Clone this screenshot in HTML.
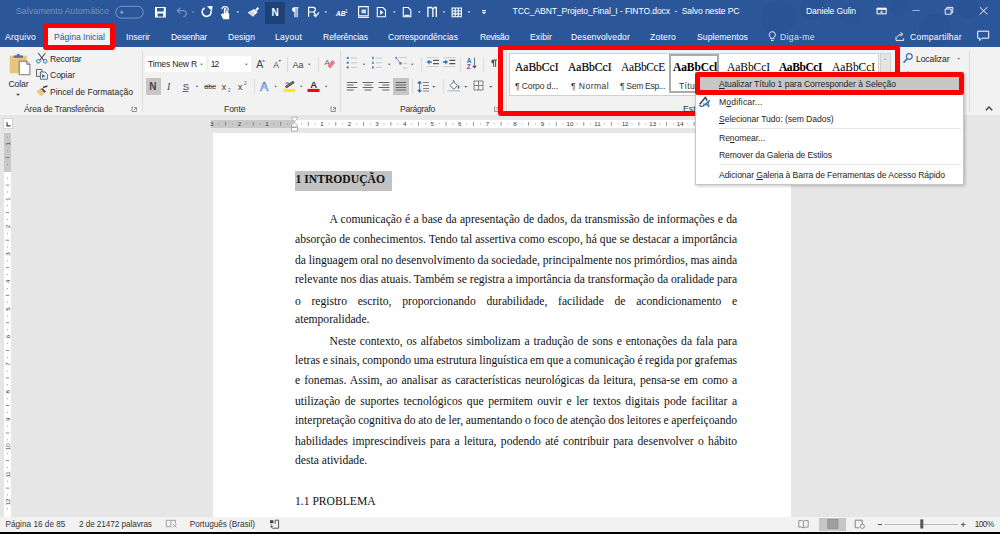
<!DOCTYPE html>
<html lang="pt-BR">
<head>
<meta charset="utf-8">
<title>TCC_ABNT_Projeto_Final_I - FINTO.docx - Word</title>
<style>
html,body{margin:0;padding:0;}
body{width:1000px;height:534px;position:relative;overflow:hidden;background:#e6e6e6;font-family:"Liberation Sans",sans-serif;}
.a{position:absolute;}
.t{position:absolute;white-space:pre;line-height:14px;height:14px;}
.t u{text-decoration:underline;text-underline-offset:1px;}
#blue{left:0;top:0;width:1000px;height:47px;background:#2b579a;}
#ribbon{left:0;top:47px;width:1000px;height:67.6px;background:#f2f2f2;}
#docbg{left:0;top:114.6px;width:1000px;height:402.4px;background:#e6e6e6;}
#page{left:212.5px;top:133px;width:578.5px;height:384px;background:#fff;}
#status{left:0;top:516.8px;width:1000px;height:15.3px;background:#f2f2f2;}
#black{left:0;top:532.1px;width:1000px;height:3px;background:#000;}
.sep{position:absolute;width:1px;background:#dcdcdc;}
.red{position:absolute;border:5px solid #fd0002;border-radius:3px;box-sizing:border-box;}
.doc{position:absolute;font-family:"Liberation Serif",serif;font-size:11.62px;line-height:20.2px;height:20.2px;color:#111;white-space:pre;}
#menu{left:694.6px;top:72px;width:269px;height:112.8px;background:#fff;border:1px solid #c6c6c6;box-sizing:border-box;z-index:10;box-shadow:1px 1px 3px rgba(0,0,0,0.25);}
.msep{position:absolute;left:719px;width:242px;height:1px;background:#e6e6e6;z-index:20;}
svg{position:absolute;overflow:visible;}
</style>
</head>
<body>
<div id="blue" class="a"></div>
<div id="ribbon" class="a"></div>
<div id="docbg" class="a"></div>
<div id="page" class="a"></div>
<div id="status" class="a"></div>
<div id="black" class="a"></div>

<!-- subtle title bar pattern -->
<svg class="a" style="left:700px;top:0;" width="300" height="47" viewBox="700 0 300 47">
<g fill="#1f4a8a" fill-opacity="0.22">
<circle cx="778" cy="18" r="17"/><circle cx="812" cy="8" r="12"/><circle cx="850" cy="14" r="10"/>
<circle cx="935" cy="30" r="16"/><circle cx="968" cy="8" r="10"/><circle cx="898" cy="6" r="9"/>
</g></svg>
<!-- active tab -->
<div class="a" style="left:48px;top:28px;width:63px;height:19px;background:#f2f2f2;"></div>
<!-- N button in QAT -->
<div class="a" style="left:265px;top:2px;width:20px;height:22px;background:#1e4178;"></div>


<!-- ribbon group separators -->
<div class="sep" style="left:141.5px;top:51px;height:61px;"></div>
<div class="sep" style="left:340px;top:51px;height:61px;"></div>
<div class="sep" style="left:968.5px;top:51px;height:61px;"></div>
<div class="sep" style="left:287px;top:57px;height:15px;"></div>
<div class="sep" style="left:318px;top:57px;height:15px;"></div>
<div class="sep" style="left:254px;top:79px;height:15px;"></div>
<div class="sep" style="left:421px;top:57px;height:15px;"></div>
<div class="sep" style="left:460px;top:57px;height:15px;"></div>
<div class="sep" style="left:483px;top:57px;height:15px;"></div>
<div class="sep" style="left:443px;top:79px;height:15px;"></div>
<div class="sep" style="left:411.7px;top:79px;height:15px;"></div>
<div class="sep" style="left:506px;top:51px;height:61px;"></div>

<!-- font boxes -->
<div class="a" style="left:145px;top:56px;width:61px;height:16px;background:#fff;"></div>
<div class="a" style="left:208.5px;top:56px;width:42px;height:16px;background:#fff;"></div>
<!-- bold active -->
<div class="a" style="left:145.5px;top:78px;width:15.5px;height:17px;background:#c6c6c6;"></div>
<!-- justify active -->
<div class="a" style="left:393px;top:78px;width:15.5px;height:17px;background:#c6c6c6;"></div>

<!-- styles gallery -->
<div class="a" style="left:509px;top:52.5px;width:370px;height:43.5px;background:#fff;border:1px solid #d0d0d0;box-sizing:border-box;"></div>
<div class="a" style="left:669.2px;top:54px;width:50.2px;height:39px;border:2px solid #ababab;box-sizing:border-box;"></div>
<div class="a" style="left:879.5px;top:52.5px;width:11px;height:43.5px;background:#e4e4e4;border:1px solid #d0d0d0;box-sizing:border-box;"></div>

<svg class="a" style="left:0;top:0;" width="1000" height="134" viewBox="0 0 1000 134" fill="none" stroke-linecap="butt">
<!-- ===== Title bar (QAT) ===== -->
<g stroke="#fff" stroke-opacity="0.36" fill="none">
  <rect x="115.8" y="6.3" width="27.4" height="11.8" rx="5.9" stroke-width="1"/>
  <circle cx="121.8" cy="12.2" r="1.7" fill="#fff" fill-opacity="0.36" stroke="none"/>
  <!-- undo (disabled) -->
  <path d="M180.5 7.6 L177.3 10.6 L180.5 13.6 M177.6 10.6 H183 Q186.3 10.6 186.3 13.6 Q186.3 16 183.5 17" stroke-width="1.2"/>
  <path d="M191.5 11.5 h3 l-1.5 1.8z" fill="#fff" fill-opacity="0.36" stroke="none"/>
</g>
<g fill="#fff" stroke="none">
  <!-- save -->
  <path d="M155 7 h10.8 v10.4 h-10.8z M157 8 v3.6 h6.8 v-3.6z M157.6 13.4 v3 h5.6 v-3z" fill-rule="evenodd"/>
  <rect x="161.3" y="14" width="1.2" height="2.4" fill="#2b579a"/>
  <!-- redo / repeat -->
  <path d="M204.600 8 A4.400 4.400 0 1 0 210.900 10.800" stroke="#fff" stroke-width="1.700" fill="none"/>
  <path d="M207 6.200 L212.500 5.900 L212.100 11.200z"/>
  <!-- touch/mouse mode -->
  <path d="M222 9.2 Q222 6.6 225 6.6 Q228.2 6.6 228.2 9.6 Q228.2 11.6 226.4 12.2 L228.6 13.4 V18.6 H223.6 L221.6 14.8 L223 14 L224.4 15.4 V9.4 Q224.4 8.6 225.2 8.6 Q226 8.6 226 9.6 V11.4" stroke="#fff" stroke-width="1.1" fill="none"/>
  <path d="M224.4 12.2 L228.6 13.4 V18.6 H223.6 L221.6 14.8 L223 14 L224.4 15.4z"/>
  <path d="M236.5 11.5 h2.6 l-1.3 1.5z"/>
  <!-- format painter -->
  <path d="M254.200 9 L257.600 12.200 L253 16.800 L247.600 12.600z"/>
  <path d="M256 10.400 L258.400 7.800" stroke="#fff" stroke-width="2"/>
  <path d="M251.300 11.300 L254.800 14.600 M249.600 12.200 L253.600 15.800" stroke="#2b579a" stroke-width="0.500"/>
  <!-- pilcrow -->
  <path d="M298.6 7.2 v1 h-0.9 v9 h-1.2 v-9 h-0.9 v9 h-1.2 v-5.2 a2.4 2.4 0 0 1 0 -4.8z"/>
  <!-- tracked-changes like icon -->
  <path d="M308 7.4 h5.2 q2.2 0 2.2 2.2 q0 1.800 -1.6 2.2 l2 3.4 M308.6 7.4 v9.400 M308.6 12 h5" stroke="#fff" stroke-width="1.2" fill="none"/>
  <path d="M313.600 14.600 l2 2 l3.400 -4.200" stroke="#fff" stroke-width="1.200" fill="none"/>
  <path d="M324.500 11.500 h2.600 l-1.300 1.500z"/>
</g>
<text x="275" y="15.700" font-family="Liberation Sans, sans-serif" font-weight="bold" font-size="10" fill="#fff" text-anchor="middle">N</text>

<!-- QAT continued -->
<g fill="#fff" stroke="none">
  <text x="336" y="16" font-family="Liberation Sans, sans-serif" font-style="italic" font-weight="bold" font-size="6.5" fill="#fff">AB</text>
  <text x="345" y="12.5" font-family="Liberation Sans, sans-serif" font-size="4.5" fill="#fff">1</text>
  <!-- page box -->
  <path d="M358.6 6.6 h9.6 v9.2 h-9.6z" stroke="#fff" stroke-width="1.1" fill="none"/>
  <rect x="358" y="16.6" width="10.8" height="1.3"/>
  <rect x="361.5" y="9.5" width="4.5" height="3.8" fill-opacity="0.8"/>
  <!-- doc with arrow -->
  <path d="M377.3 7.5 h5.7 l2.5 2.500 v6.800 h-8.200z" stroke="#fff" stroke-width="1.1" fill="none"/>
  <path d="M380 10 l3.600 2.400 -3.600 2.400z"/>
  <path d="M393 11.500 h2.600 l-1.300 1.500z"/>
  <!-- page -->
  <path d="M403.300 7.500 h5 l2.500 2.500 v6.800 h-7.500z" stroke="#fff" stroke-width="1.1" fill="none"/>
  <rect x="404.500" y="14.800" width="5" height="1.500"/>
  <path d="M418 11.500 h2.600 l-1.300 1.500z"/>
  <!-- columns -->
  <path d="M427.900 17 v-9.500 h3.600 l1.400 1.400 v8.100 M432.900 8.900 l1.400 -1.400 h2 v9.500" stroke="#fff" stroke-width="1.300" fill="none"/>
  <path d="M442.700 11.500 h2.600 l-1.300 1.500z"/>
  <!-- table -->
  <path d="M452.100 8 h9.300 v8.700 h-9.300z M452.100 11 h9.300 M452.100 13.900 h9.300 M455.200 8 v8.700 M458.300 8 v8.700" stroke="#fff" stroke-width="1.100" fill="none"/>
  <path d="M467.700 11.500 h2.600 l-1.300 1.500z"/>
  <!-- customize -->
  <rect x="482" y="10" width="4" height="0.900"/>
  <path d="M481.800 11.800 h4.400 l-2.200 2.400z"/>
  <!-- ribbon display options -->
  <path d="M877 8.200 h9.200 v5.600 h-9.200z" stroke="#fff" stroke-width="1" fill="none"/>
  <rect x="877" y="8.200" width="9.200" height="1.600"/>
  <path d="M881.600 10.600 l1.600 1.800 h-3.200z"/>
  <!-- window controls -->
  <rect x="912.400" y="10" width="7.400" height="0.800" fill-opacity="0.7"/>
  <path d="M945.200 9 h6 v5.200 h-6z M946.800 9 v-1.600 h6 v5.200 h-1.600" stroke="#fff" stroke-width="0.900" fill="none"/>
  <path d="M979.800 7.200 l7.600 7.200 M987.400 7.200 l-7.600 7.200" stroke="#fff" stroke-width="0.900" fill="none"/>
  <!-- bulb -->
  <path d="M772.300 31.700 a3 3 0 0 1 1.600 5.600 v1.400 h-3.200 v-1.400 a3 3 0 0 1 1.600 -5.600z M771 40.500 h2.600" stroke="#fff" stroke-width="0.900" fill="none"/>
  <!-- share -->
  <path d="M896 36.800 v3.600 h7.600 v-2 M896.800 37.500 q1.200 -3.200 4.600 -3.200 M900.400 32.300 l2.600 2 -2.600 2" stroke="#fff" stroke-width="0.900" fill="none"/>
  <!-- comment -->
  <path d="M977.700 31.200 h11 v7 h-6.800 l-2.200 2.400 v-2.400 h-2z" stroke="#fff" stroke-width="1" fill="none"/>
</g>

<!-- ===== Ribbon: clipboard ===== -->
<rect x="9.700" y="55.800" width="17.100" height="17.500" fill="#eac47c"/>
<path d="M13.600 57.700 v-2.200 h3 a1.700 1.700 0 0 1 3.400 0 h3 v2.200z" fill="#5a6b84"/>
<path d="M19.200 61.200 h7.600 l3.100 3.100 v10.400 h-10.700z" fill="#fff" stroke="#555" stroke-width="0.800"/>
<path d="M26.800 61.200 v3.100 h3.100" fill="none" stroke="#555" stroke-width="0.800"/>
<path d="M16 93.800 h4 l-2 2.200z" fill="#555"/>
<!-- scissors -->
<path d="M38.200 53 l5.400 7.200 M45.400 53 l-5.400 7.200" stroke="#555" stroke-width="1.100"/>
<circle cx="38.400" cy="61.300" r="1.800" stroke="#2e75b6" stroke-width="1"/>
<circle cx="45.200" cy="61.300" r="1.800" stroke="#2e75b6" stroke-width="1"/>
<!-- copy -->
<path d="M36.500 69.400 h5.400 v7 h-5.400z" stroke="#555" stroke-width="0.900" fill="#f1f1f1"/>
<path d="M40.400 72 h4.600 l2.400 2.400 v4.800 h-7z" stroke="#555" stroke-width="0.900" fill="#fff"/>
<path d="M42 74 l3.600 2 -3.600 2z" fill="#2e75b6"/>
<!-- format painter -->
<path d="M36.400 91.400 l4.600 -3.400 4 4.200 -3.800 4z" fill="#eac47c"/>
<path d="M41.600 88.600 l3.800 3.600 M43 87.600 l4.400 -1.600" stroke="#444" stroke-width="1.600"/>
<!-- launchers -->
<g stroke="#777" stroke-width="0.800" fill="none">
<path d="M133 107 h-1 v4.500 h4.500 v-1 M134 107.500 h2.500 v2.500 M136.300 107.700 l-2.300 2.300"/>
<path d="M332 107 h-1 v4.500 h4.500 v-1 M333 107.500 h2.500 v2.500 M335.300 107.700 l-2.300 2.300"/>
<path d="M495.500 107 h-1 v4.500 h4.500 v-1 M496.500 107.500 h2.500 v2.500 M498.800 107.700 l-2.300 2.300"/>
</g>

<!-- ===== Ribbon: font ===== -->
<g fill="#555">
<path d="M200.300 63.700 h2.600 l-1.300 1.500z"/>
<path d="M245.100 63.700 h2.600 l-1.300 1.500z"/>
<path d="M308 63.700 h2.600 l-1.300 1.500z"/>
<path d="M195.700 85.700 h2.600 l-1.300 1.500z"/>
<path d="M274.400 85.700 h2.600 l-1.300 1.500z"/>
<path d="M299.900 85.700 h2.600 l-1.300 1.500z"/>
<path d="M324.900 85.700 h2.600 l-1.300 1.500z"/>
</g>
<g font-family="Liberation Sans, sans-serif" fill="#444">
<text x="256.300" y="67.700" font-size="10.500">A</text>
<path d="M262 61.500 l1.600 -1.800 1.600 1.800z" fill="#2e75b6"/>
<text x="273.200" y="67.700" font-size="8.500">A</text>
<path d="M278.200 60 l1.600 1.800 1.600 -1.800z" fill="#2e75b6"/>
<text x="292.600" y="67.500" font-size="9">Aa</text>
<text x="149.300" y="90.200" font-size="10" font-weight="bold">N</text>
<text x="167" y="90.200" font-size="10" font-style="italic" font-family="Liberation Serif, serif">I</text>
<text x="182.700" y="89.800" font-size="9.500">S</text>
<rect x="182.500" y="91" width="6" height="0.800"/>
<text x="204.200" y="89" font-size="7.200">abc</text>
<rect x="204" y="86.200" width="12" height="0.700"/>
<text x="221.600" y="89.500" font-size="9.500">x</text>
<text x="227.800" y="91.500" font-size="5" fill="#2e75b6">2</text>
<text x="237.800" y="89.500" font-size="9.500">x</text>
<text x="243.800" y="84.500" font-size="5" fill="#2e75b6">2</text>
<text x="260" y="90.600" font-size="12.500" fill="#fff" stroke="#4a8acb" stroke-width="0.650">A</text>
<text x="310.300" y="88" font-size="9.500" font-weight="bold" fill="#333">A</text>
</g>
<rect x="307.500" y="88.900" width="12" height="3.100" fill="#fb0007"/>
<rect x="283.500" y="88.900" width="11.700" height="3.100" fill="#ffec00"/>
<path d="M285.200 86.600 l7.800 -5.400 1.200 1.600 -7.400 5z M285.600 83 h3.600" stroke="#444" stroke-width="0.900" fill="#777"/>
<!-- clear formatting -->
<text x="324.500" y="65" font-size="8" font-family="Liberation Sans, sans-serif" fill="#666">A</text>
<path d="M327.400 65.800 l5 -5.800 2.800 2.600 -5 5.800z" fill="#e8788a"/>

<!-- ===== Ribbon: paragraph ===== -->
<g fill="#2e75b6">
<rect x="346.800" y="57" width="1.900" height="1.900"/><rect x="346.800" y="61.800" width="1.900" height="1.900"/><rect x="346.800" y="66.400" width="1.900" height="1.900"/>
<rect x="372.200" y="56.800" width="1.400" height="2.400"/><rect x="372.200" y="61.600" width="1.400" height="2.400"/><rect x="372.200" y="66.200" width="1.400" height="2.400"/>
<rect x="395.300" y="56.900" width="1.500" height="1.500"/><rect x="399.300" y="62.300" width="2.200" height="2.200"/>
<path d="M396 58 l4 4.600" stroke="#2e75b6" stroke-width="0.800"/>
</g>
<g stroke="#c4c4c4" stroke-width="0.900">
<path d="M350.800 58 h6.400 M350.800 62.800 h6.400 M350.800 67.400 h6.400"/>
<path d="M375.800 58 h6.400 M375.800 62.800 h6.400 M375.800 67.400 h6.400"/>
<path d="M398.500 57.600 h8.500 M403 63.300 h4.200 M403 68 h4.200"/>
</g>
<g fill="#555">
<path d="M362.700 63.700 h2.600 l-1.300 1.500z"/>
<path d="M388 63.700 h2.600 l-1.300 1.500z"/>
<path d="M411 63.700 h2.600 l-1.300 1.500z"/>
<path d="M432.300 85.900 h3 l-1.500 1.800z"/>
<path d="M464.300 85.900 h3 l-1.500 1.800z"/>
<path d="M489.300 85.900 h3 l-1.500 1.800z"/>
<path d="M957.300 58 h2.600 l-1.300 1.500z"/>
</g>
<!-- indents -->
<g stroke="#555" stroke-width="1.100">
<path d="M433 60.400 h6 M433 63.600 h6"/>
<path d="M449.300 60.400 h6 M449.300 63.600 h6"/>
</g>
<g stroke="#c4c4c4" stroke-width="0.800">
<path d="M426.500 57.600 h12.500 M426.500 66.600 h12.500 M442.800 57.600 h12.500 M442.800 66.600 h12.500"/>
</g>
<path d="M426.600 62 l3 -2.600 v1.800 h2.400 v1.600 h-2.400 v1.800z" fill="#2e75b6"/>
<path d="M448.200 62 l-3 -2.600 v1.800 h-2.400 v1.600 h2.400 v1.800z" fill="#2e75b6"/>
<!-- sort -->
<text x="466.800" y="62.600" font-size="6.500" font-weight="bold" font-family="Liberation Sans, sans-serif" fill="#2e75b6">A</text>
<text x="466.800" y="69" font-size="6.500" font-weight="bold" font-family="Liberation Sans, sans-serif" fill="#8e3ea8">Z</text>
<path d="M474.500 57.500 v9 M472.800 66 h3.400 l-1.700 2.200z" stroke="#555" stroke-width="0.800" fill="#555"/>
<!-- pilcrow -->
<path d="M497 59.600 v0.900 h-0.900 v6.500 h-1 v-6.500 h-0.900 v6.500 h-1 v-3.400 a2 2 0 0 1 0 -4z" fill="#555"/>
<!-- alignments -->
<g stroke="#666" stroke-width="1">
<path d="M346.800 82.500 h10.500 M346.800 85 h7 M346.800 87.500 h10.500 M346.800 90 h7"/>
<path d="M362.600 82.500 h10.800 M364.400 85 h7.200 M362.600 87.500 h10.800 M364.400 90 h7.200"/>
<path d="M378.600 82.500 h10.800 M382.200 85 h7.200 M378.600 87.500 h10.800 M382.200 90 h7.200"/>
<path d="M395.500 82.500 h10.600 M395.500 85 h10.600 M395.500 87.500 h10.600 M395.500 90 h10.600"/>
</g>
<!-- line spacing -->
<path d="M419.600 82 v9.400 M417.800 83.200 l1.800 -2.200 1.800 2.200z M417.800 90.200 l1.800 2.200 1.800 -2.200z" stroke="#2e75b6" stroke-width="0.900" fill="#2e75b6"/>
<path d="M423 82.500 h6 M423 85.500 h6 M423 88.500 h6 M423 91 h6" stroke="#777" stroke-width="0.900"/>
<!-- shading -->
<path d="M450 85.600 l3.600 -3.800 4 3.800 -3.800 3.800z" stroke="#555" stroke-width="0.900" fill="#fff"/>
<path d="M452.800 80.600 q1.400 -0.800 1.600 1.600" stroke="#555" stroke-width="0.800"/>
<path d="M458.600 85 q1.800 2.400 0 4 q-1.800 -1.600 0 -4z" fill="#2e75b6"/>
<rect x="447.500" y="90" width="12.500" height="1.500" fill="#c8c8c8"/>
<!-- borders -->
<path d="M474 81 h9 v9 h-9z M478.500 81 v9 M474 85.500 h9" stroke="#777" stroke-width="0.900"/>
<!-- find -->
<circle cx="909.300" cy="56.500" r="2.900" stroke="#2e75b6" stroke-width="1.200"/>
<path d="M907.200 58.800 l-3.600 3.800" stroke="#2e75b6" stroke-width="1.600"/>
<text x="904" y="75" font-size="6" font-family="Liberation Sans, sans-serif" fill="#2e75b6">ab</text>
<!-- collapse ribbon -->
<path d="M985.800 110.200 l3.200 -3.200 3.200 3.200" stroke="#444" stroke-width="1.500"/>
<!-- gallery scroll -->
<path d="M883.800 60 l1.400 -1.600 1.400 1.600z" fill="#aaa"/>
<!-- menu icon placeholder -->
</svg>


<!-- ruler -->
<div class="a" style="left:2.6px;top:118px;width:10.8px;height:10.6px;background:#fff;border:1px solid #d4d4d4;box-sizing:border-box;"></div>
<div class="a" style="left:211px;top:119.5px;width:83.5px;height:8.5px;background:#c8c8c8;"></div>
<div class="a" style="left:294.5px;top:119.5px;width:443px;height:8.5px;background:#fff;"></div>
<div class="a" style="left:737.5px;top:119.5px;width:54px;height:8.5px;background:#c8c8c8;"></div>
<!-- vertical ruler -->
<div class="a" style="left:3.8px;top:133px;width:7.4px;height:38.6px;background:#c8c8c8;"></div>
<div class="a" style="left:3.8px;top:171.600px;width:7.4px;height:345px;background:#fff;"></div>

<svg class="a" style="left:0;top:0;" width="1000" height="534" viewBox="0 0 1000 534" font-family="Liberation Sans, sans-serif" font-size="6.2" fill="#3a3a3a" text-anchor="middle">
<text x="211.8" y="126.0">3</text>
<rect x="218.3" y="123.3" width="0.8" height="1" fill="#888"/>
<rect x="225.2" y="122.0" width="0.8" height="3.6" fill="#777"/>
<rect x="232.1" y="123.3" width="0.8" height="1" fill="#888"/>
<text x="239.4" y="126.0">2</text>
<rect x="245.9" y="123.3" width="0.8" height="1" fill="#888"/>
<rect x="252.8" y="122.0" width="0.8" height="3.6" fill="#777"/>
<rect x="259.7" y="123.3" width="0.8" height="1" fill="#888"/>
<text x="266.9" y="126.0">1</text>
<rect x="273.4" y="123.3" width="0.8" height="1" fill="#888"/>
<rect x="280.3" y="122.0" width="0.8" height="3.6" fill="#777"/>
<rect x="287.2" y="123.3" width="0.8" height="1" fill="#888"/>
<rect x="301.0" y="123.3" width="0.8" height="1" fill="#888"/>
<rect x="307.9" y="122.0" width="0.8" height="3.6" fill="#777"/>
<rect x="314.8" y="123.3" width="0.8" height="1" fill="#888"/>
<text x="322.1" y="126.0">1</text>
<rect x="328.5" y="123.3" width="0.8" height="1" fill="#888"/>
<rect x="335.4" y="122.0" width="0.8" height="3.6" fill="#777"/>
<rect x="342.3" y="123.3" width="0.8" height="1" fill="#888"/>
<text x="349.6" y="126.0">2</text>
<rect x="356.1" y="123.3" width="0.8" height="1" fill="#888"/>
<rect x="363.0" y="122.0" width="0.8" height="3.6" fill="#777"/>
<rect x="369.9" y="123.3" width="0.8" height="1" fill="#888"/>
<text x="377.1" y="126.0">3</text>
<rect x="383.6" y="123.3" width="0.8" height="1" fill="#888"/>
<rect x="390.5" y="122.0" width="0.8" height="3.6" fill="#777"/>
<rect x="397.4" y="123.3" width="0.8" height="1" fill="#888"/>
<text x="404.7" y="126.0">4</text>
<rect x="411.2" y="123.3" width="0.8" height="1" fill="#888"/>
<rect x="418.1" y="122.0" width="0.8" height="3.6" fill="#777"/>
<rect x="425.0" y="123.3" width="0.8" height="1" fill="#888"/>
<text x="432.2" y="126.0">5</text>
<rect x="438.7" y="123.3" width="0.8" height="1" fill="#888"/>
<rect x="445.6" y="122.0" width="0.8" height="3.6" fill="#777"/>
<rect x="452.5" y="123.3" width="0.8" height="1" fill="#888"/>
<text x="459.8" y="126.0">6</text>
<rect x="466.3" y="123.3" width="0.8" height="1" fill="#888"/>
<rect x="473.2" y="122.0" width="0.8" height="3.6" fill="#777"/>
<rect x="480.1" y="123.3" width="0.8" height="1" fill="#888"/>
<text x="487.4" y="126.0">7</text>
<rect x="493.8" y="123.3" width="0.8" height="1" fill="#888"/>
<rect x="500.7" y="122.0" width="0.8" height="3.6" fill="#777"/>
<rect x="507.6" y="123.3" width="0.8" height="1" fill="#888"/>
<text x="514.9" y="126.0">8</text>
<rect x="521.4" y="123.3" width="0.8" height="1" fill="#888"/>
<rect x="528.3" y="122.0" width="0.8" height="3.6" fill="#777"/>
<rect x="535.2" y="123.3" width="0.8" height="1" fill="#888"/>
<text x="542.5" y="126.0">9</text>
<rect x="548.9" y="123.3" width="0.8" height="1" fill="#888"/>
<rect x="555.8" y="122.0" width="0.8" height="3.6" fill="#777"/>
<rect x="562.7" y="123.3" width="0.8" height="1" fill="#888"/>
<text x="570.0" y="126.0">10</text>
<rect x="576.5" y="123.3" width="0.8" height="1" fill="#888"/>
<rect x="583.4" y="122.0" width="0.8" height="3.6" fill="#777"/>
<rect x="590.3" y="123.3" width="0.8" height="1" fill="#888"/>
<text x="597.5" y="126.0">11</text>
<rect x="604.0" y="123.3" width="0.8" height="1" fill="#888"/>
<rect x="610.9" y="122.0" width="0.8" height="3.6" fill="#777"/>
<rect x="617.8" y="123.3" width="0.8" height="1" fill="#888"/>
<text x="625.1" y="126.0">12</text>
<rect x="631.6" y="123.3" width="0.8" height="1" fill="#888"/>
<rect x="638.5" y="122.0" width="0.8" height="3.6" fill="#777"/>
<rect x="645.4" y="123.3" width="0.8" height="1" fill="#888"/>
<text x="652.7" y="126.0">13</text>
<rect x="659.1" y="123.3" width="0.8" height="1" fill="#888"/>
<rect x="666.0" y="122.0" width="0.8" height="3.6" fill="#777"/>
<rect x="672.9" y="123.3" width="0.8" height="1" fill="#888"/>
<text x="680.2" y="126.0">14</text>
<rect x="686.7" y="123.3" width="0.8" height="1" fill="#888"/>
<rect x="693.6" y="122.0" width="0.8" height="3.6" fill="#777"/>
<rect x="700.5" y="123.3" width="0.8" height="1" fill="#888"/>
<text x="707.8" y="126.0">15</text>
<rect x="714.2" y="123.3" width="0.8" height="1" fill="#888"/>
<rect x="721.1" y="122.0" width="0.8" height="3.6" fill="#777"/>
<rect x="728.0" y="123.3" width="0.8" height="1" fill="#888"/>
<text x="735.3" y="126.0">16</text>
<rect x="741.8" y="123.3" width="0.8" height="1" fill="#888"/>
<rect x="748.7" y="122.0" width="0.8" height="3.6" fill="#777"/>
<rect x="755.6" y="123.3" width="0.8" height="1" fill="#888"/>
<text x="762.9" y="126.0">17</text>
<rect x="769.3" y="123.3" width="0.8" height="1" fill="#888"/>
<rect x="776.2" y="122.0" width="0.8" height="3.6" fill="#777"/>
<rect x="783.1" y="123.3" width="0.8" height="1" fill="#888"/>
<path d="M291.6 117.2 h5.8 v1.2 l-2.900 2.900 l-2.900 -2.900z" fill="#fff" stroke="#999" stroke-width="0.7"/>
<path d="M291.6 127 v-2 l2.900 -2.900 l2.900 2.900 v2z" fill="#fff" stroke="#999" stroke-width="0.7"/>
<rect x="291.6" y="127.600" width="5.800" height="3.400" fill="#fff" stroke="#999" stroke-width="0.7"/>
<path d="M7 122.300 v3.600 h3.600" fill="none" stroke="#444" stroke-width="1.200"/>
<rect x="7.0" y="136.5" width="1" height="0.8" fill="#888"/>
<text x="7.5" y="145.9" transform="rotate(-90 7.5 143.8)">1</text>
<rect x="7.0" y="150.2" width="1" height="0.8" fill="#888"/>
<rect x="5.7" y="157.1" width="3.6" height="0.8" fill="#777"/>
<rect x="7.0" y="164.0" width="1" height="0.8" fill="#888"/>
<rect x="7.0" y="177.8" width="1" height="0.8" fill="#888"/>
<rect x="5.7" y="184.7" width="3.6" height="0.8" fill="#777"/>
<rect x="7.0" y="191.6" width="1" height="0.8" fill="#888"/>
<text x="7.5" y="201.1" transform="rotate(-90 7.5 198.9)">1</text>
<rect x="7.0" y="205.3" width="1" height="0.8" fill="#888"/>
<rect x="5.7" y="212.2" width="3.6" height="0.8" fill="#777"/>
<rect x="7.0" y="219.1" width="1" height="0.8" fill="#888"/>
<text x="7.5" y="228.6" transform="rotate(-90 7.5 226.4)">2</text>
<rect x="7.0" y="232.9" width="1" height="0.8" fill="#888"/>
<rect x="5.7" y="239.8" width="3.6" height="0.8" fill="#777"/>
<rect x="7.0" y="246.7" width="1" height="0.8" fill="#888"/>
<text x="7.5" y="256.2" transform="rotate(-90 7.5 254.0)">3</text>
<rect x="7.0" y="260.4" width="1" height="0.8" fill="#888"/>
<rect x="5.7" y="267.3" width="3.6" height="0.8" fill="#777"/>
<rect x="7.0" y="274.2" width="1" height="0.8" fill="#888"/>
<text x="7.5" y="283.7" transform="rotate(-90 7.5 281.5)">4</text>
<rect x="7.0" y="288.0" width="1" height="0.8" fill="#888"/>
<rect x="5.7" y="294.9" width="3.6" height="0.8" fill="#777"/>
<rect x="7.0" y="301.8" width="1" height="0.8" fill="#888"/>
<text x="7.5" y="311.2" transform="rotate(-90 7.5 309.1)">5</text>
<rect x="7.0" y="315.5" width="1" height="0.8" fill="#888"/>
<rect x="5.7" y="322.4" width="3.6" height="0.8" fill="#777"/>
<rect x="7.0" y="329.3" width="1" height="0.8" fill="#888"/>
<text x="7.5" y="338.8" transform="rotate(-90 7.5 336.6)">6</text>
<rect x="7.0" y="343.1" width="1" height="0.8" fill="#888"/>
<rect x="5.7" y="350.0" width="3.6" height="0.8" fill="#777"/>
<rect x="7.0" y="356.9" width="1" height="0.8" fill="#888"/>
<text x="7.5" y="366.3" transform="rotate(-90 7.5 364.1)">7</text>
<rect x="7.0" y="370.6" width="1" height="0.8" fill="#888"/>
<rect x="5.7" y="377.5" width="3.6" height="0.8" fill="#777"/>
<rect x="7.0" y="384.4" width="1" height="0.8" fill="#888"/>
<text x="7.5" y="393.9" transform="rotate(-90 7.5 391.7)">8</text>
<rect x="7.0" y="398.2" width="1" height="0.8" fill="#888"/>
<rect x="5.7" y="405.1" width="3.6" height="0.8" fill="#777"/>
<rect x="7.0" y="412.0" width="1" height="0.8" fill="#888"/>
<text x="7.5" y="421.4" transform="rotate(-90 7.5 419.2)">9</text>
<rect x="7.0" y="425.7" width="1" height="0.8" fill="#888"/>
<rect x="5.7" y="432.6" width="3.6" height="0.8" fill="#777"/>
<rect x="7.0" y="439.5" width="1" height="0.8" fill="#888"/>
<text x="7.5" y="449.0" transform="rotate(-90 7.5 446.8)">10</text>
<rect x="7.0" y="453.3" width="1" height="0.8" fill="#888"/>
<rect x="5.7" y="460.2" width="3.6" height="0.8" fill="#777"/>
<rect x="7.0" y="467.1" width="1" height="0.8" fill="#888"/>
<text x="7.5" y="476.6" transform="rotate(-90 7.5 474.4)">11</text>
<rect x="7.0" y="480.8" width="1" height="0.8" fill="#888"/>
<rect x="5.7" y="487.7" width="3.6" height="0.8" fill="#777"/>
<rect x="7.0" y="494.6" width="1" height="0.8" fill="#888"/>
<text x="7.5" y="504.1" transform="rotate(-90 7.5 501.9)">12</text>
<rect x="7.0" y="508.4" width="1" height="0.8" fill="#888"/>
</svg>

<!-- document -->
<div class="a" style="left:295px;top:171.3px;width:97px;height:19.7px;background:#c2c2c2;"></div>
<div class="doc" style="top:169.5px;font-weight:bold;left:295.6px;">1 INTRODUÇÃO</div>
<div class="doc" style="left:329.5px;top:210.3px;width:408.0px;word-spacing:0.359px;">A comunicação é a base da apresentação de dados, da transmissão de informações e da</div>
<div class="doc" style="left:295.0px;top:230.3px;width:442.5px;word-spacing:0.139px;">absorção de conhecimentos. Tendo tal assertiva como escopo, há que se destacar a importância</div>
<div class="doc" style="left:295.0px;top:251.3px;width:442.5px;word-spacing:-0.168px;letter-spacing:0.000px;">da linguagem oral no desenvolvimento da sociedade, principalmente nos primórdios, mas ainda</div>
<div class="doc" style="left:295.0px;top:270.1px;width:442.5px;word-spacing:0.017px;">relevante nos dias atuais. Também se registra a importância da transformação da oralidade para</div>
<div class="doc" style="left:295.0px;top:291.6px;width:442.5px;word-spacing:7.801px;">o registro escrito, proporcionando durabilidade, facilidade de acondicionamento e</div>
<div class="doc" style="left:295.0px;top:310.4px;width:442.5px;">atemporalidade.</div>
<div class="doc" style="left:329.5px;top:332.0px;width:408.0px;word-spacing:0.956px;">Neste contexto, os alfabetos simbolizam a tradução de sons e entonações da fala para</div>
<div class="doc" style="left:295.0px;top:350.9px;width:442.5px;word-spacing:-0.405px;letter-spacing:0.000px;">letras e sinais, compondo uma estrutura linguística em que a comunicação é regida por grafemas</div>
<div class="doc" style="left:295.0px;top:370.9px;width:442.5px;word-spacing:1.128px;">e fonemas. Assim, ao analisar as características neurológicas da leitura, pensa-se em como a</div>
<div class="doc" style="left:295.0px;top:391.8px;width:442.5px;word-spacing:1.697px;">utilização de suportes tecnológicos que permitem ouvir e ler textos digitais pode facilitar a</div>
<div class="doc" style="left:295.0px;top:410.9px;width:442.5px;word-spacing:-0.324px;letter-spacing:0.000px;">interpretação cognitiva do ato de ler, aumentando o foco de atenção dos leitores e aperfeiçoando</div>
<div class="doc" style="left:295.0px;top:432.1px;width:442.5px;word-spacing:1.449px;">habilidades imprescindíveis para a leitura, podendo até contribuir para desenvolver o hábito</div>
<div class="doc" style="left:295.0px;top:451.4px;width:442.5px;">desta atividade.</div>
<div class="doc" style="left:295.0px;top:492.3px;width:442.5px;">1.1 PROBLEMA</div>

<!-- status bar view buttons -->
<div class="a" style="left:819px;top:517.5px;width:26.5px;height:13.5px;background:#c6c6c6;"></div>

<svg class="a" style="left:0;top:514px;" width="1000" height="20" viewBox="0 514 1000 20" fill="none">
<!-- proofing -->
<path d="M166.300 520.300 h4.600 v6.400 h-4.600z M170.900 520.300 h4.600 v3" stroke="#9a9a9a" stroke-width="0.900"/>
<path d="M173 524 l3.400 3.400 M176.400 524 l-3.400 3.400" stroke="#9a9a9a" stroke-width="0.900"/>
<!-- macro -->
<path d="M270 520.200 h3.400 v3 h-3.400z" fill="#444"/>
<path d="M275.200 520.200 h3.400 v8 h-6.400 M275.200 523.600 v-3.400" stroke="#555" stroke-width="1"/>
<path d="M271.600 524.400 v3 M270.200 526 l1.400 1.600 1.400 -1.600" stroke="#555" stroke-width="0.800"/>
<!-- read mode -->
<path d="M798.800 520.600 q2.400 -0.600 4.600 0.600 q2.400 -1.200 4.800 -0.600 v6.600 q-2.400 -0.600 -4.800 0.600 q-2.200 -1.200 -4.600 -0.600z M803.400 521.200 v6.600" stroke="#8a8a8a" stroke-width="0.900"/>
<!-- print layout -->
<rect x="827.800" y="519.400" width="10.100" height="9.100" fill="#9e9e9e" stroke="#8c8c8c" stroke-width="0.800"/>
<!-- web layout -->
<path d="M855.200 520.200 h7 v3.600 M855.200 520.200 v7.600 h4" stroke="#777" stroke-width="0.900"/>
<circle cx="862.300" cy="526.300" r="2.100" stroke="#777" stroke-width="0.800"/>
<!-- zoom -->
<rect x="877.800" y="524.100" width="4.200" height="1" fill="#555"/>
<rect x="885" y="524.200" width="73" height="0.800" fill="#aaa"/>
<rect x="920.300" y="519.400" width="3" height="9.100" fill="#555"/>
<path d="M961 524.600 h4.400 M963.200 522.400 v4.400" stroke="#555" stroke-width="1"/>
</svg>

<!-- red highlight boxes -->
<div class="red" style="left:43.2px;top:23.2px;width:72.3px;height:26.8px;"></div>
<div class="red" style="left:498px;top:45px;width:401.5px;height:71px;"></div>

<!-- context menu -->
<div id="menu" class="a"></div>
<div class="a" style="left:699px;top:76px;width:260px;height:14px;background:#c6c6c6;z-index:15;"></div>
<div class="msep" style="top:127.8px;"></div>
<div class="msep" style="top:164px;"></div>
<div class="red" style="left:695px;top:71.5px;width:269px;height:23px;z-index:30;"></div>

<svg class="a" style="left:0;top:0;z-index:25;" width="1000" height="200" viewBox="0 0 1000 200" fill="none">
<path d="M699.800 104.200 L705.400 97.200 L707 100.800" stroke="#444" stroke-width="1.500" stroke-linejoin="round"/>
<path d="M699.600 105.400 Q702 107.600 704.200 105 L709.600 100.400 Q707 103.800 708.600 106.600 M703.600 104 L709 105.600" stroke="#2e75b6" stroke-width="1.300" stroke-linecap="round"/>
</svg>
<span class="t" style='left:16.0px;top:4.0px;font-size:8.60px;color:rgba(255,255,255,0.36);font-family:"Liberation Sans", sans-serif;letter-spacing:0.126px;'>Salvamento Automático</span>
<span class="t" style='left:512.5px;top:4.2px;font-size:8.60px;color:#ffffff;font-family:"Liberation Sans", sans-serif;letter-spacing:-0.117px;'>TCC_ABNT_Projeto_Final_I - FINTO.docx  -  Salvo neste PC</span>
<span class="t" style='left:806.0px;top:4.0px;font-size:8.60px;color:#ffffff;font-family:"Liberation Sans", sans-serif;letter-spacing:-0.125px;'>Daniele Gulin</span>
<span class="t" style='left:5.0px;top:29.5px;font-size:8.60px;color:#ffffff;font-family:"Liberation Sans", sans-serif;letter-spacing:0.263px;'>Arquivo</span>
<span class="t" style='left:54.0px;top:29.5px;font-size:8.60px;color:#2b579a;font-family:"Liberation Sans", sans-serif;letter-spacing:-0.011px;'>Página Inicial</span>
<span class="t" style='left:126.0px;top:29.5px;font-size:8.60px;color:#ffffff;font-family:"Liberation Sans", sans-serif;letter-spacing:0.015px;'>Inserir</span>
<span class="t" style='left:171.0px;top:29.5px;font-size:8.60px;color:#ffffff;font-family:"Liberation Sans", sans-serif;letter-spacing:-0.161px;'>Desenhar</span>
<span class="t" style='left:228.0px;top:29.5px;font-size:8.60px;color:#ffffff;font-family:"Liberation Sans", sans-serif;letter-spacing:0.038px;'>Design</span>
<span class="t" style='left:275.0px;top:29.5px;font-size:8.60px;color:#ffffff;font-family:"Liberation Sans", sans-serif;letter-spacing:0.196px;'>Layout</span>
<span class="t" style='left:323.0px;top:29.5px;font-size:8.60px;color:#ffffff;font-family:"Liberation Sans", sans-serif;letter-spacing:-0.081px;'>Referências</span>
<span class="t" style='left:388.0px;top:29.5px;font-size:8.60px;color:#ffffff;font-family:"Liberation Sans", sans-serif;letter-spacing:0.013px;'>Correspondências</span>
<span class="t" style='left:480.0px;top:29.5px;font-size:8.60px;color:#ffffff;font-family:"Liberation Sans", sans-serif;letter-spacing:-0.296px;'>Revisão</span>
<span class="t" style='left:530.0px;top:29.5px;font-size:8.60px;color:#ffffff;font-family:"Liberation Sans", sans-serif;letter-spacing:0.082px;'>Exibir</span>
<span class="t" style='left:571.0px;top:29.5px;font-size:8.60px;color:#ffffff;font-family:"Liberation Sans", sans-serif;letter-spacing:0.126px;'>Desenvolvedor</span>
<span class="t" style='left:650.0px;top:29.5px;font-size:8.60px;color:#ffffff;font-family:"Liberation Sans", sans-serif;letter-spacing:0.191px;'>Zotero</span>
<span class="t" style='left:697.0px;top:29.5px;font-size:8.60px;color:#ffffff;font-family:"Liberation Sans", sans-serif;letter-spacing:0.073px;'>Suplementos</span>
<span class="t" style='left:780.0px;top:29.5px;font-size:8.60px;color:rgba(255,255,255,0.8);font-family:"Liberation Sans", sans-serif;letter-spacing:0.357px;'>Diga-me</span>
<span class="t" style='left:910.0px;top:29.5px;font-size:8.60px;color:#ffffff;font-family:"Liberation Sans", sans-serif;letter-spacing:0.231px;'>Compartilhar</span>
<span class="t" style='left:8.5px;top:76.5px;font-size:8.60px;color:#262626;font-family:"Liberation Sans", sans-serif;letter-spacing:-0.110px;'>Colar</span>
<span class="t" style='left:50.0px;top:51.6px;font-size:8.60px;color:#262626;font-family:"Liberation Sans", sans-serif;letter-spacing:-0.185px;'>Recortar</span>
<span class="t" style='left:50.0px;top:68.0px;font-size:8.60px;color:#262626;font-family:"Liberation Sans", sans-serif;letter-spacing:-0.056px;'>Copiar</span>
<span class="t" style='left:50.0px;top:84.7px;font-size:8.60px;color:#262626;font-family:"Liberation Sans", sans-serif;letter-spacing:-0.033px;'>Pincel de Formatação</span>
<span class="t" style='left:24.0px;top:102.0px;font-size:8.60px;color:#333;font-family:"Liberation Sans", sans-serif;letter-spacing:-0.220px;'>Área de Transferência</span>
<span class="t" style='left:148.0px;top:57.0px;font-size:8.60px;color:#262626;font-family:"Liberation Sans", sans-serif;letter-spacing:-0.208px;'>Times New R</span>
<span class="t" style='left:210.7px;top:57.2px;font-size:8.40px;color:#262626;font-family:"Liberation Sans", sans-serif;letter-spacing:-0.722px;'>12</span>
<span class="t" style='left:224.0px;top:102.0px;font-size:8.60px;color:#333;font-family:"Liberation Sans", sans-serif;letter-spacing:-0.098px;'>Fonte</span>
<span class="t" style='left:400.0px;top:102.0px;font-size:8.60px;color:#333;font-family:"Liberation Sans", sans-serif;letter-spacing:-0.308px;'>Parágrafo</span>
<span class="t" style='left:916.0px;top:51.5px;font-size:8.60px;color:#262626;font-family:"Liberation Sans", sans-serif;letter-spacing:-0.102px;'>Localizar</span>
<span class="t" style='left:515.0px;top:60.3px;font-size:11.50px;color:#000;font-family:"Liberation Serif", serif;letter-spacing:0.009px;-webkit-text-stroke:0.2px #000;'>AaBbCcI</span>
<span class="t" style='left:568.0px;top:60.3px;font-size:11.50px;color:#000;font-family:"Liberation Serif", serif;letter-spacing:0.009px;-webkit-text-stroke:0.2px #000;'>AaBbCcI</span>
<span class="t" style='left:621.0px;top:60.3px;font-size:11.50px;color:#000;font-family:"Liberation Serif", serif;letter-spacing:-0.376px;'>AaBbCcE</span>
<span class="t" style='left:673.0px;top:60.3px;font-size:11.50px;color:#000;font-family:"Liberation Serif", serif;font-weight:bold;letter-spacing:-0.104px;'>AaBbCcl</span>
<span class="t" style='left:727.0px;top:60.3px;font-size:11.50px;color:#000;font-family:"Liberation Serif", serif;letter-spacing:-0.062px;'>AaBbCcI</span>
<span class="t" style='left:779.0px;top:60.3px;font-size:11.50px;color:#000;font-family:"Liberation Serif", serif;font-weight:bold;letter-spacing:-0.430px;'>AaBbCcI</span>
<span class="t" style='left:832.0px;top:60.3px;font-size:11.50px;color:#000;font-family:"Liberation Serif", serif;letter-spacing:-0.062px;'>AaBbCcI</span>
<span class="t" style='left:515.0px;top:79.4px;font-size:8.60px;color:#333;font-family:"Liberation Sans", sans-serif;letter-spacing:-0.148px;'>¶ Corpo d...</span>
<span class="t" style='left:571.0px;top:79.4px;font-size:8.60px;color:#333;font-family:"Liberation Sans", sans-serif;letter-spacing:0.410px;'>¶ Normal</span>
<span class="t" style='left:620.0px;top:79.4px;font-size:8.60px;color:#333;font-family:"Liberation Sans", sans-serif;letter-spacing:-0.339px;'>¶ Sem Esp...</span>
<span class="t" style='left:679.0px;top:79.4px;font-size:8.60px;color:#333;font-family:"Liberation Sans", sans-serif;letter-spacing:0.296px;'>Títu</span>
<span class="t" style='left:683.0px;top:102.0px;font-size:8.60px;color:#333;font-family:"Liberation Sans", sans-serif;letter-spacing:0.096px;'>Estilos</span>
<span class="t" style='left:5.5px;top:518.0px;font-size:8.20px;color:#333;font-family:"Liberation Sans", sans-serif;letter-spacing:0.018px;'>Página 16 de 85</span>
<span class="t" style='left:79.0px;top:518.0px;font-size:8.20px;color:#333;font-family:"Liberation Sans", sans-serif;letter-spacing:-0.069px;'>2 de 21472 palavras</span>
<span class="t" style='left:189.7px;top:518.2px;font-size:8.20px;color:#333;font-family:"Liberation Sans", sans-serif;letter-spacing:-0.018px;'>Português (Brasil)</span>
<span class="t" style='left:974.8px;top:518.2px;font-size:8.20px;color:#333;font-family:"Liberation Sans", sans-serif;letter-spacing:-0.518px;'>100%</span>
<span class="t" style='left:719.0px;top:76.7px;font-size:8.60px;color:#262626;font-family:"Liberation Sans", sans-serif;letter-spacing:-0.056px;z-index:20;'><u>A</u>tualizar Título 1 para Corresponder à Seleção</span>
<span class="t" style='left:719.0px;top:95.0px;font-size:8.60px;color:#262626;font-family:"Liberation Sans", sans-serif;letter-spacing:0.160px;z-index:20;'>M<u>o</u>dificar...</span>
<span class="t" style='left:719.0px;top:112.3px;font-size:8.60px;color:#262626;font-family:"Liberation Sans", sans-serif;letter-spacing:-0.059px;z-index:20;'><u>S</u>elecionar Tudo: (sem Dados)</span>
<span class="t" style='left:719.0px;top:131.0px;font-size:8.60px;color:#262626;font-family:"Liberation Sans", sans-serif;letter-spacing:-0.077px;z-index:20;'>Re<u>n</u>omear...</span>
<span class="t" style='left:719.0px;top:148.0px;font-size:8.60px;color:#262626;font-family:"Liberation Sans", sans-serif;letter-spacing:-0.125px;z-index:20;'>Remover da Galeria de Estilos</span>
<span class="t" style='left:719.0px;top:167.5px;font-size:8.60px;color:#262626;font-family:"Liberation Sans", sans-serif;letter-spacing:-0.094px;z-index:20;'>Adicionar <u>G</u>aleria à Barra de Ferramentas de Acesso Rápido</span>
</body>
</html>
